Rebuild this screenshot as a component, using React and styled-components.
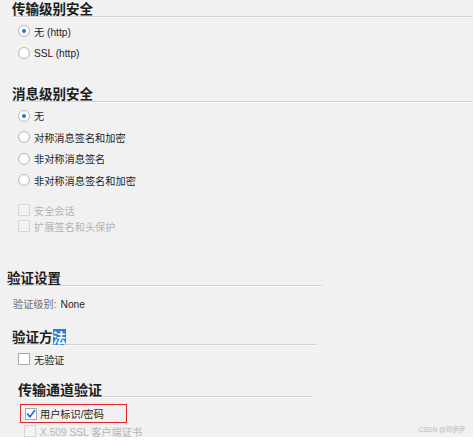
import * as React from 'react';
import styled, { createGlobalStyle } from 'styled-components';

const GlobalStyle = createGlobalStyle`
  html, body {
    margin: 0;
    padding: 0;
    background: #ffffff;
  }
  body {
    font-family: "Liberation Sans", "Noto Sans CJK SC", sans-serif;
  }
`;

const Panel = styled.div`
  position: relative;
  width: 473px;
  height: 437px;
  overflow: hidden;
  background: #f1f1f1;
  color: #1e1e1e;
  font-size: 10.2px;
`;

const Header = styled.div`
  box-sizing: border-box;
  height: ${p => p.$h || 17}px;
  margin-top: ${p => p.$top || 0}px;
  margin-left: ${p => p.$indent}px;
  width: ${p => p.$width}px;
  padding-top: 2px;
  display: flex;
  align-items: center;
  font-family: "Noto Sans CJK SC", sans-serif;
  font-size: ${p => p.$size || 13.5}px;
  font-weight: 700;
  line-height: 1;
  color: #1c1c1c;
  border-bottom: 1px solid #d2d2d2;
  box-shadow: 0 1px 0 #f9f9f9;
`;

const Selected = styled.span`
  background: #2c7fd6;
  color: #ffffff;
  padding: 2px 0 1px;
`;

const Group = styled.div`
  display: flex;
  flex-direction: column;
  margin-top: ${p => p.$top || 0}px;
  padding-left: ${p => p.$indent || 18}px;
`;

const Row = styled.div`
  display: flex;
  align-items: center;
  gap: 4px;
  height: ${p => p.$h || 16}px;
  color: ${p => (p.$disabled ? '#b4b4b4' : '#1e1e1e')};
`;

const Radio = styled.span`
  box-sizing: border-box;
  width: 12px;
  height: 12px;
  border-radius: 50%;
  border: 1px solid ${p => (p.$on ? '#c9b4b8' : '#b9b9b9')};
  background: radial-gradient(circle at 50% 40%, #ffffff 40%, #ececec 100%);
  display: flex;
  align-items: center;
  justify-content: center;
  &::after {
    content: '';
    display: ${p => (p.$on ? 'block' : 'none')};
    width: 4px;
    height: 4px;
    border-radius: 50%;
    background: #1f76cf;
  }
`;

const Box = styled.span`
  box-sizing: border-box;
  width: 12px;
  height: 12px;
  border: 1px solid ${p => (p.$disabled ? '#d6d6d6' : '#a9a9a9')};
  background: ${p => (p.$disabled ? '#f3f3f3' : '#ffffff')};
  display: flex;
  align-items: center;
  justify-content: center;
`;

const Label = styled.span`
  font-family: "Liberation Sans", "Noto Sans CJK SC", sans-serif;
  white-space: nowrap;
`;

const Muted = styled.span`
  color: #6e6e6e;
  margin-right: 4px;
`;

const Marked = styled.div`
  box-sizing: border-box;
  display: flex;
  align-items: center;
  gap: 3px;
  width: 107px;
  height: 19px;
  margin-left: 20px;
  margin-top: ${p => p.$top}px;
  padding-left: 4px;
  border: 1.5px solid #e0262b;
`;

const Watermark = styled.span`
  position: absolute;
  right: 8px;
  bottom: 3px;
  font-size: 6.5px;
  color: #b9b9b9;
  font-family: "Liberation Sans", "Noto Sans CJK SC", sans-serif;
`;

function Check() {
  return (
    <Box>
      <svg width="10" height="10" viewBox="0 0 10 10">
        <path d="M1.6 5.2 L4 7.8 L8.6 1.6" fill="none" stroke="#1a6fd2" strokeWidth="1.7" strokeLinecap="round" strokeLinejoin="round" />
      </svg>
    </Box>
  );
}

export default function App() {
  return (
    <Panel>
      <GlobalStyle />
      <Header $indent={12} $width={461}>传输级别安全</Header>
      <Group $top={3}>
        <Row $h={22}><Radio $on /><Label>无 (http)</Label></Row>
        <Row $h={22}><Radio /><Label>SSL (http)</Label></Row>
      </Group>

      <Header $top={21} $indent={12} $width={461}>消息级别安全</Header>
      <Group $top={3}>
        <Row $h={21.5}><Radio $on /><Label>无</Label></Row>
        <Row $h={21.5}><Radio /><Label>对称消息签名和加密</Label></Row>
        <Row $h={21.5}><Radio /><Label>非对称消息签名</Label></Row>
        <Row $h={21.5}><Radio /><Label>非对称消息签名和加密</Label></Row>
      </Group>
      <Group $top={11}>
        <Row $disabled><Box $disabled /><Label>安全会话</Label></Row>
        <Row $disabled><Box $disabled /><Label>扩展签名和头保护</Label></Row>
      </Group>

      <Header $top={35} $indent={7} $width={315}>验证设置</Header>
      <Group $top={9} $indent={13}>
        <Row><Label><Muted>验证级别:</Muted>None</Label></Row>
      </Group>

      <Header $top={17} $indent={12} $width={305}>验证方<Selected>法</Selected></Header>
      <Group $top={6}>
        <Row><Box /><Label>无验证</Label></Row>
      </Group>

      <Header $top={12} $h={18} $size={14} $indent={18} $width={294}>传输通道验证</Header>
      <Marked $top={7}>
        <Check />
        <Label>用户标识/密码</Label>
      </Marked>
      <Group $top={0} $indent={24}>
        <Row $disabled><Box $disabled /><Label>X.509 SSL 客户端证书</Label></Row>
      </Group>

      <Watermark>CSDN @邓伊伊</Watermark>
    </Panel>
  );
}
